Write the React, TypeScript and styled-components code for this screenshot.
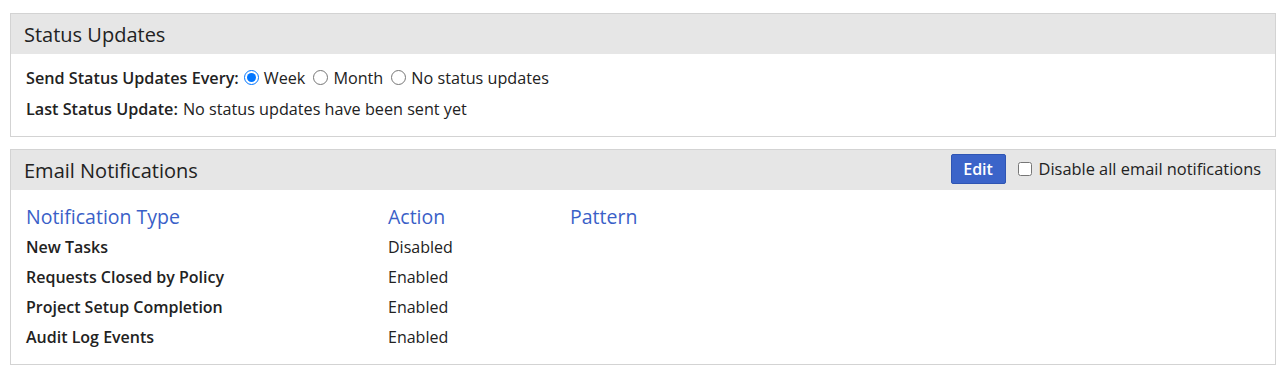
import React from "react";
import styled, { createGlobalStyle } from "styled-components";

const Global = createGlobalStyle`
  html, body { margin: 0; padding: 0; background: #fff; }
  body {
    font-family: "Open Sans", "Noto Sans", sans-serif;
    color: #222;
    font-size: 16.2px;
  }
`;

const Page = styled.div`
  display: flex;
  flex-direction: column;
  gap: 12px;
  padding: 13px 8px 0 10px;
`;

const Panel = styled.section`
  border: 1px solid #d3d3d3;
  background: #fff;
`;

const PanelHeader = styled.div`
  display: flex;
  align-items: center;
  justify-content: space-between;
  height: 40px;
  padding: 0 14px 0 13px;
  background: #e6e6e6;
`;

const PanelTitle = styled.h2`
  margin: 0;
  font-size: 20px;
  font-weight: 400;
  color: #222;
`;

const HeaderActions = styled.div`
  display: flex;
  align-items: center;
  gap: 12px;
`;

const EditButton = styled.button`
  font-family: inherit;
  font-size: 16px;
  font-weight: 600;
  color: #fff;
  background: #3b64c9;
  border: 1px solid #2f55b3;
  border-radius: 2px;
  height: 30px;
  width: 55px;
  padding: 0;
  cursor: pointer;
  margin-top: -3px;
`;

const CheckLabel = styled.label`
  display: flex;
  align-items: center;
  gap: 7px;
  font-size: 16.4px;
  color: #222;
  margin-top: -3px;
`;

const Checkbox = styled.input`
  margin: 0;
  width: 14px;
  height: 14px;
`;

const StatusBody = styled.div`
  display: flex;
  flex-direction: column;
  padding: 8px 14px 12px 15px;
`;

const Line = styled.div`
  display: flex;
  align-items: center;
  height: 31px;
`;

const Label = styled.span`
  font-weight: 600;
  margin-right: 5px;
`;

const RadioLabel = styled.label`
  display: inline-flex;
  align-items: center;
  gap: 5px;
  margin-right: 8px;
`;

const Radio = styled.input`
  margin: 0;
  width: 15px;
  height: 15px;
`;

const Table = styled.div`
  display: grid;
  grid-template-columns: 362px 182px 1fr;
  padding: 11px 14px 12px 15px;
`;

const HeadCell = styled.div`
  color: #3a5fc8;
  font-size: 19.5px;
  height: 31px;
  display: flex;
  align-items: center;
`;

const Cell = styled.div<{ $bold?: boolean }>`
  font-size: 16px;
  font-weight: ${(p) => (p.$bold ? 600 : 400)};
  height: 30px;
  display: flex;
  align-items: center;
`;

const rows = [
  ["New Tasks", "Disabled"],
  ["Requests Closed by Policy", "Enabled"],
  ["Project Setup Completion", "Enabled"],
  ["Audit Log Events", "Enabled"],
];

export default function App() {
  return (
    <>
      <Global />
      <Page>
        <Panel>
          <PanelHeader>
            <PanelTitle>Status Updates</PanelTitle>
          </PanelHeader>
          <StatusBody>
            <Line>
              <Label>Send Status Updates Every:</Label>
              <RadioLabel>
                <Radio type="radio" name="freq" defaultChecked /> Week
              </RadioLabel>
              <RadioLabel>
                <Radio type="radio" name="freq" /> Month
              </RadioLabel>
              <RadioLabel>
                <Radio type="radio" name="freq" /> No status updates
              </RadioLabel>
            </Line>
            <Line>
              <Label>Last Status Update:</Label>
              No status updates have been sent yet
            </Line>
          </StatusBody>
        </Panel>
        <Panel>
          <PanelHeader>
            <PanelTitle>Email Notifications</PanelTitle>
            <HeaderActions>
              <EditButton>Edit</EditButton>
              <CheckLabel>
                <Checkbox type="checkbox" /> Disable all email notifications
              </CheckLabel>
            </HeaderActions>
          </PanelHeader>
          <Table>
            <HeadCell>Notification Type</HeadCell>
            <HeadCell>Action</HeadCell>
            <HeadCell>Pattern</HeadCell>
            {rows.map(([name, action]) => (
              <React.Fragment key={name}>
                <Cell $bold>{name}</Cell>
                <Cell>{action}</Cell>
                <Cell />
              </React.Fragment>
            ))}
          </Table>
        </Panel>
      </Page>
    </>
  );
}
